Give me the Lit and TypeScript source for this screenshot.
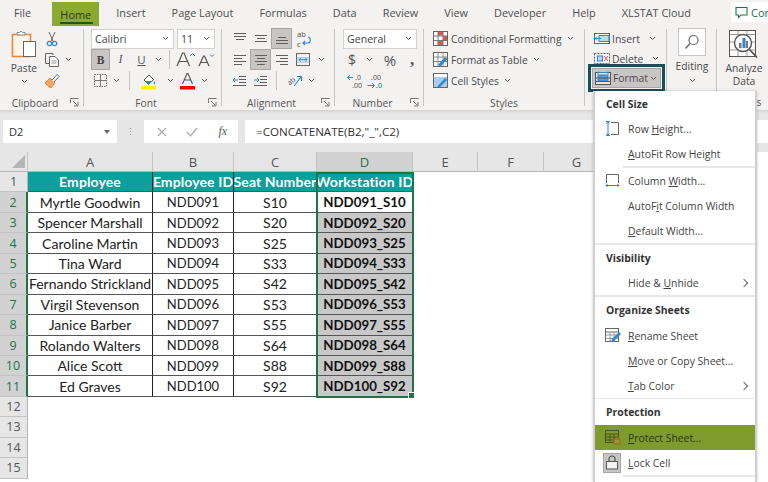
import { LitElement, html, css, svg } from "lit";
import { customElement } from "lit/decorators.js";

const G = "#5f5f5f";
const B = "#2f86d2";
const O = "#e8893a";
const ic = (w: number, h: number, body: unknown) =>
  html`<svg width=${w} height=${h} viewBox="0 0 ${w} ${h}" fill="none" stroke-width="1">${body}</svg>`;
const lines = (arr: number[][], c = G) =>
  arr.map(([a, b, y]) => svg`<path d="M${a} ${y}H${b}" stroke=${c}/>`);
const chev = html`<svg class="chev" width="7" height="5" viewBox="0 0 7 5" fill="none"><path d="M1 1l2.500 2.500L6 1" stroke="#555" stroke-width="1"/></svg>`;
const launcher = ic(9, 9, svg`<path d="M.5 5V.5H8.5" stroke="#777"/><path d="M3 3l4.500 4.500M4 8h4V4" stroke="#777"/>`);

const paste = ic(26, 28, svg`
  <rect x="1.500" y="4.500" width="18" height="22" stroke=${O} stroke-width="1.600" fill="#fff6ea"/>
  <path d="M6 5V2.500h2.500L10 1l1.500 1.500H14V5z" stroke="#888" fill="#fff"/>
  <rect x="12.500" y="11.500" width="12" height="15" stroke="#666" fill="#fff"/>`);
const scissors = ic(12, 16, svg`
  <path d="M3 1l4 9M9 1L5 10" stroke="#666"/>
  <circle cx="3.500" cy="12.500" r="2.200" stroke=${B} stroke-width="1.200"/><circle cx="8.500" cy="12.500" r="2.200" stroke=${B} stroke-width="1.200"/>`);
const copy = ic(16, 16, svg`
  <path d="M9 3V1.500H1.500V11.500H5" stroke="#666"/>
  <path d="M5.500 4.500H11L14.500 8V14.500H5.500z" stroke="#666" fill="#fff"/>
  <path d="M7.500 9H12.500M7.500 11H12.500" stroke="#999"/>`);
const painter = ic(16, 16, svg`
  <path d="M1 10l5-5 5 5-4 5c-1-1-1-1-2-.5 0-1.500-1-1-1.500-2C3 12.500 2 11 1 10z" fill="#f4a460" stroke=${O}/>
  <path d="M8 7l5-5.500 2 2-5 5.500" stroke="#666" fill="#fff"/>`);
const border = ic(15, 15, svg`
  <rect x="1.500" y="1.500" width="12" height="12" stroke="#777" stroke-dasharray="1.500 1"/>
  <path d="M7.500 1.500V13.500M1.500 7.500H13.500" stroke="#777"/>`);
const fill = ic(16, 18, svg`
  <path d="M3 8l5-5 4.500 4.500-5 5z" stroke="#555" fill="#fff"/><path d="M4 9h7.500l-4 3.500z" fill=${B}/>
  <path d="M13 9c1 1.500 1.500 2 1 3s-2 0-1-3z" fill=${B}/>
  <rect x="0" y="14" width="15" height="3.500" fill="#ffef00"/>`);
const fontA = ic(15, 18, svg`
  <path d="M2.500 12L7 1.500h1L12.500 12M4.500 8h6" stroke="#555" stroke-width="1.100"/>
  <rect x="0" y="14" width="15" height="3.500" fill="#f00"/>`);
const bigA = ic(20, 18, svg`
  <path d="M1 15L6.500 2h1.500L13.500 15M3.500 10.500h8" stroke="#555" stroke-width="1.200"/><path d="M14 5l2.500-2.500L19 5" stroke=${B}/>`);
const smallA = ic(17, 16, svg`
  <path d="M1 14L5.500 4h1L11 14M3 10.500h6" stroke="#555" stroke-width="1.200"/><path d="M12 2.500l2 2 2-2" stroke=${B}/>`);
const alTop = ic(14, 14, lines([[1, 13, 1.5], [1, 13, 4.5], [3, 11, 7.5]]));
const alMid = ic(14, 14, lines([[1, 13, 3.5], [3, 11, 6.5], [1, 13, 9.5]]));
const alBot = ic(14, 14, lines([[3, 11, 5.5], [1, 13, 8.5], [1, 13, 11.5]]));
const alL = ic(14, 14, lines([[1, 13, 2.5], [1, 9, 5.5], [1, 13, 8.5], [1, 9, 11.5]]));
const alC = ic(14, 14, lines([[1, 13, 2.5], [3, 11, 5.5], [1, 13, 8.5], [3, 11, 11.5]]));
const alR = ic(14, 14, lines([[1, 13, 2.5], [5, 13, 5.5], [1, 13, 8.5], [5, 13, 11.5]]));
const merge = ic(15, 15, svg`
  <rect x=".5" y="1.500" width="13" height="12" stroke="#666"/><path d="M1 5.500H13M1 10H13" stroke="#aaa"/>
  <rect x="1" y="5.500" width="12" height="4.500" fill="#cfe3f5"/><path d="M3 7.700H11M4.500 6L3 7.700 4.500 9.500M9.500 6L11 7.700 9.500 9.500" stroke=${B}/>`);
const indentL = ic(15, 12, svg`${lines([[7, 14, 1.5], [7, 14, 4.5], [7, 14, 7.5], [1, 14, 10.5]])}<path d="M1 5h5M3 3L1 5l2 2" stroke=${B}/>`);
const indentR = ic(15, 12, svg`${lines([[7, 14, 1.5], [7, 14, 4.5], [7, 14, 7.5], [1, 14, 10.5]])}<path d="M1 5h5M4 3l2 2-2 2" stroke=${B}/>`);
const orient = ic(18, 16, svg`
  <text x="2" y="11" font-size="7" fill="#555" font-family="Noto Sans" transform="rotate(-40 6 8)">ab</text>
  <path d="M9 13L16 4M12 3.500h4.500V8" stroke=${B} stroke-width="1.100"/>`);
const wrap = ic(16, 19, svg`
  <text x="1" y="8" font-size="7.500" fill="#555" font-family="Noto Sans">ab</text>
  <text x="1" y="18" font-size="7.500" fill="#555" font-family="Noto Sans">c</text>
  <path d="M12 8c3 0 3 6 0 6H7M9 12l-2 2 2 2" stroke=${B} stroke-width="1.100"/>`);
const decL = ic(17, 16, svg`
  <path d="M.5 4.500H6M3 2L.5 4.500 3 7" stroke=${B}/>
  <text x="8" y="7" font-size="7" fill="#555" font-family="Noto Sans">.0</text><text x="5" y="15" font-size="7" fill="#555" font-family="Noto Sans">.00</text>`);
const decR = ic(17, 16, svg`
  <text x="4" y="7" font-size="7" fill="#555" font-family="Noto Sans">.00</text>
  <path d="M.5 12.500H7M5 10l2.500 2.500L5 15" stroke=${B}/><text x="9" y="15" font-size="7" fill="#555" font-family="Noto Sans">.0</text>`);
const cond = ic(15, 15, svg`
  <rect x=".5" y=".5" width="14" height="14" stroke="#666" fill="#fff"/>
  <rect x="5" y="1" width="5" height="3.500" fill="#e4524c"/><rect x="10" y="5" width="4" height="4" fill="#e4524c"/><rect x="5" y="9" width="5" height="5" fill="#e4524c"/>
  <path d="M5 1V14M10 1V14M1 5H14M1 9.500H14" stroke="#777"/>`);
const fmtTable = ic(15, 15, svg`
  <rect x=".5" y=".5" width="14" height="14" stroke="#666" fill="#fff"/>
  <path d="M5 1V14M10 1V14M1 5H14M1 9.500H14" stroke="#888"/>
  <path d="M5 13l7-8 2.500 2-7 7.500z" fill=${B}/>`);
const cellSt = ic(15, 15, svg`
  <rect x=".5" y=".5" width="14" height="14" stroke="#666" fill="#fff"/>
  <rect x="1" y="4" width="13" height="10" fill="#a9cdea"/>
  <path d="M4 14l8-9 2 2-7 7z" fill=${B}/>`);
const insIc = ic(16, 13, svg`
  <rect x=".5" y="1.500" width="15" height="10" stroke="#666" fill="#fff"/><rect x="5" y="3.500" width="10" height="6" fill="#bcd8f0" stroke=${B}/>
  <path d="M1 6.500H7M3 4.500L1 6.500 3 8.500" stroke=${B}/>`);
const delIc = ic(16, 13, svg`
  <rect x=".5" y="1.500" width="15" height="10" stroke="#666" stroke-dasharray="2 1"/><rect x="3.500" y="4" width="5" height="5" fill="#bcd8f0" stroke=${B}/>
  <path d="M10 4l4 5M14 4l-4 5" stroke="#e4524c"/>`);
const fmtIc = ic(16, 14, svg`
  <rect x=".5" y="1.500" width="15" height="12" stroke="#555" fill="#e6e6e6"/><rect x="3" y="4" width="10" height="6" fill="#5b9ad8" stroke=${B}/>
  <path d="M3 .500V3M13 .500V3M3 1.500H13" stroke=${B}/><path d="M1 7H15M1 10.500H15" stroke="#555"/>`);
const magn = ic(16, 16, svg`<circle cx="9.500" cy="6" r="4.500" stroke="#666" stroke-width="1.200"/><path d="M6 9.500L1.500 14.500" stroke="#666" stroke-width="1.400"/>`);
const analyze = ic(30, 30, svg`
  <rect x=".5" y=".5" width="26" height="26" stroke="#555" fill="#fff"/>
  <path d="M1 4.500H26M1 12H26M1 20H26M9 1V26M18 1V26" stroke="#999"/>
  <circle cx="14" cy="13" r="8.500" stroke="#555" stroke-width="1.400" fill="#fff"/>
  <rect x="10" y="13" width="2.500" height="5" fill="#777"/><rect x="13.500" y="8" width="3" height="10" fill=${B}/><rect x="17" y="11" width="2" height="7" fill="#777"/>
  <path d="M20.500 19.500L28 27.500" stroke="#555" stroke-width="1.800"/>`);
const comment = ic(13, 13, svg`<path d="M1 1.500H12V9H6L3.500 11.500V9H1z" stroke="#217346" stroke-width="1.100"/>`);

const rowH = ic(15, 15, svg`
  <path d="M6 1.500H13.500V13.500H6" stroke="#666"/><path d="M3 1V14M1.500 2.500L3 1 4.500 2.500M1.500 12.500L3 14 4.500 12.500" stroke=${B}/><path d="M1 .5H5M1 14.500H5" stroke=${B}/>`);
const colW = ic(15, 15, svg`
  <path d="M1.500 10V1.500H13.500V10" stroke="#666"/><path d="M1 12.500H14M2.500 11L1 12.500 2.500 14M12.500 11L14 12.500 12.500 14" stroke=${B}/>`);
const rename = ic(16, 15, svg`
  <rect x=".5" y=".5" width="13" height="13" stroke="#666" fill="#fff"/><path d="M1 4H13" stroke="#666"/><path d="M5 4V13M9 4V13M1 7H13M1 10.500H13" stroke="#999"/>
  <path d="M6 14l1-3 7-7 2 2-7 7z" fill=${B}/>`);
const protect = ic(16, 15, svg`
  <rect x=".5" y=".5" width="13" height="12" stroke="#4a5320" /><path d="M1 4H13" stroke="#4a5320"/><path d="M5 4V12M9 4V12M1 7H13M1 10H13" stroke="#4a5320"/>
  <rect x="9" y="9" width="6" height="5" fill="#a8903a" stroke="#8a6d1e"/><path d="M10.500 9V7.500a1.500 1.500 0 0 1 3 0V9" stroke="#8a6d1e"/>`);
const lock = ic(14, 15, svg`<rect x="1.500" y="6.500" width="11" height="7.500" stroke="#555" fill="#f2f2f2"/><path d="M4 6.500V4a3 3 0 0 1 6 0V6.500" stroke="#555" stroke-width="1.200"/>`);

type Entry =
  | { h: string; tall?: boolean }
  | { sep: string }
  | { pre: string; u: string; post: string; icon?: unknown; arrow?: boolean; hot?: boolean; boxed?: boolean };

const MENU: Entry[] = [
  { h: "Cell Size" },
  { pre: "Row ", u: "H", post: "eight...", icon: rowH },
  { pre: "", u: "A", post: "utoFit Row Height" },
  { sep: "short" },
  { pre: "Column ", u: "W", post: "idth...", icon: colW },
  { pre: "AutoF", u: "i", post: "t Column Width" },
  { pre: "", u: "D", post: "efault Width..." },
  { sep: "full" },
  { h: "Visibility" },
  { pre: "Hide & ", u: "U", post: "nhide", arrow: true },
  { sep: "full" },
  { h: "Organize Sheets", tall: true },
  { pre: "", u: "R", post: "ename Sheet", icon: rename },
  { pre: "", u: "M", post: "ove or Copy Sheet..." },
  { pre: "", u: "T", post: "ab Color", arrow: true },
  { sep: "thin" },
  { h: "Protection", tall: true },
  { pre: "", u: "P", post: "rotect Sheet...", icon: protect, hot: true },
  { pre: "", u: "L", post: "ock Cell", icon: lock, boxed: true },
  { sep: "short" },
];

const DATA = [
  ["Myrtle Goodwin", "NDD091", "S10", "NDD091_S10"],
  ["Spencer Marshall", "NDD092", "S20", "NDD092_S20"],
  ["Caroline Martin", "NDD093", "S25", "NDD093_S25"],
  ["Tina Ward", "NDD094", "S33", "NDD094_S33"],
  ["Fernando Strickland", "NDD095", "S42", "NDD095_S42"],
  ["Virgil Stevenson", "NDD096", "S53", "NDD096_S53"],
  ["Janice Barber", "NDD097", "S55", "NDD097_S55"],
  ["Rolando Walters", "NDD098", "S64", "NDD098_S64"],
  ["Alice Scott", "NDD099", "S88", "NDD099_S88"],
  ["Ed Graves", "NDD100", "S92", "NDD100_S92"],
];
const HEAD = ["Employee", "Employee ID", "Seat Number", "Workstation ID"];
const TABS = ["Insert", "Page Layout", "Formulas", "Data", "Review", "View", "Developer", "Help", "XLSTAT Cloud"];

@customElement("app-root")
export class AppRoot extends LitElement {
  static styles = css`
    :host { display: block; position: relative; width: 768px; height: 482px; overflow: hidden; background: #fff;
      font-family: "Open Sans", "Noto Sans", sans-serif; font-size: 10.3px; color: #4a4a4a; }
    svg { display: block; flex: none; }
    .tabs { display: flex; height: 26px; background: #f3f2f1; padding-left: 14px; align-items: center; font-size: 10.9px; }
    .tab { margin-right: 26px; white-space: nowrap; color: #4f4f4f; padding-bottom: 2px; }
    .tab.file { margin-right: 21px; }
    .tab.home { background: #8bab30; height: 24px; margin: 2px 17px 0 0; width: 47px; display: flex; align-items: center; justify-content: center; position: relative; color: #2e3a10; padding: 0; }
    .tab.home::after { content: ""; position: absolute; left: 8px; right: 6px; bottom: 2px; height: 2px; background: #1c5a17; }
    .comments { position: absolute; left: 731px; top: 2px; width: 37px; height: 20px; background: #fff; display: flex; align-items: center; gap: 3px; padding-left: 4px; overflow: hidden; color: #217346; font-size: 11px; box-sizing: border-box; }
    .ribbon { display: flex; height: 84px; background: #f3f2f1; }
    .g { position: relative; display: flex; flex-direction: column; padding-top: 2px; box-sizing: border-box; height: 84px; flex: none; }
    .sep { width: 1px; margin: 3px 0 4px; background: #c8c6c4; flex: none; }
    .g1 { width: 83px; } .g2 { width: 137px; } .g3 { width: 112px; } .g4 { width: 88px; } .g5 { width: 160px; } .g6 { width: 81px; } .g7 { width: 49px; } .g8 { width: 50px; }
    .lab { margin-top: auto; height: 15px; display: flex; align-items: center; white-space: nowrap; color: #555; }
    .lab span { flex: 1; text-align: center; }
    .lab i { width: 13px; flex: none; display: flex; }
    .rows { display: flex; flex-direction: column; }
    .r { display: grid; height: 21px; align-items: center; justify-items: center; }
    .clip { display: grid; grid-template-columns: 42px 41px; }
    .paste { display: flex; flex-direction: column; align-items: center; padding: 2px 0 0 6px; }
    .paste b { font-weight: 400; margin: 3px 0 4px; line-height: 14px; }
    .clip .r { grid-template-columns: 20px 12px; justify-content: start; }
    .combo { background: #fff; border: 1px solid #d4d2d0; height: 20px; box-sizing: border-box; display: flex; align-items: center; justify-content: space-between; padding: 0 4px 0 3px; font-size: 10.6px; color: #444; }
    .r.f1 { grid-template-columns: 83px 38px; gap: 3px; margin-left: 7px; justify-content: start; justify-items: stretch; }
    .r.f2 { grid-template-columns: 19px 21px 21px 12px 11px 21px 21px; margin-left: 7px; justify-content: start; }
    .r.f3 { grid-template-columns: 18px 14px 12px 28px 14px 20px 15px; margin-left: 7px; justify-content: start; }
    .on { background: #c8c6c4; border: 1px solid #a8a6a4; box-sizing: border-box; width: 100%; height: 21px; display: flex; align-items: center; justify-content: center; }
    .fb { font: 700 11.5px "Liberation Serif", serif; color: #444; }
    .fi { font: italic 12px "Liberation Serif", serif; color: #555; }
    .fu { font-size: 11.5px; color: #555; text-decoration: underline; }
    .vs { width: 1px; height: 19px; background: #c8c6c4; }
    .r.a1 { grid-template-columns: 21px 21px 21px 23px; margin-left: 7px; justify-content: start; }
    .r.a2 { grid-template-columns: 21px 21px 21px 23px 12px; margin-left: 7px; justify-content: start; }
    .r.a3 { grid-template-columns: 21px 21px 11px 24px 10px; margin-left: 7px; justify-content: start; }
    .r.n1 { grid-template-columns: 74px; margin-left: 8px; justify-content: start; justify-items: stretch; }
    .r.n2 { grid-template-columns: 20px 15px 26px 18px; margin-left: 7px; justify-content: start; }
    .r.n3 { grid-template-columns: 20px 20px; margin-left: 10px; justify-content: start; }
    .cur { font-size: 14px; color: #555; }
    .pct { font-size: 15px; color: #555; }
    .com { font-size: 17px; font-weight: 700; color: #555; line-height: 1; font-family: "Liberation Serif", serif; margin-top: -1px; }
    .st { display: flex; align-items: center; height: 21px; padding-left: 9px; gap: 3px; white-space: nowrap; }
    .st .chev { margin-left: 2px; }
    .cl { display: flex; align-items: center; height: 20px; white-space: nowrap; margin-left: 9px; gap: 2px; padding-top: 1px; box-sizing: border-box; font-size: 10.4px; }
    .cl .chev { margin-left: 7px; }
    .fmt { display: flex; align-items: center; height: 20px; width: 69px; margin: 0 0 0 7px; background: #c8c6c4; box-sizing: border-box; border: 1px solid #a8a6a4; outline: 3px solid #17505a; outline-offset: 1px; font-size: 10.4px; padding-left: 2px; gap: 2px; }
    .big { display: flex; flex-direction: column; align-items: center; text-align: center; }
    .box { width: 28px; height: 28px; background: #fff; border: 1px solid #c8c6c4; box-sizing: border-box; display: flex; align-items: center; justify-content: center; }
    .big .t { margin-top: 3px; }
    .g7 { padding-left: 1px; }
    .g7 .chev { margin-top: 5px; }
    .an { line-height: 13px; padding: 4px 0 0 4px; }
    .an .t { margin-top: 2px; }
    .an .lab { width: 46px; margin-left: -4px; flex: none; }
    .shade { height: 10px; background: linear-gradient(#d2d2d2, #e6e6e6 3px); }
    .fbar { display: flex; height: 23px; padding: 0 0 0 3px; background: #e6e6e6; align-items: stretch; }
    .strip { background: #e6e6e6; height: 9px; }
    .name { width: 114px; background: #fff; display: flex; align-items: center; justify-content: space-between; padding: 0 7px 0 6px; box-sizing: border-box; font-size: 11px; color: #333; }
    .caret { width: 0; height: 0; border: 3px solid transparent; border-top: 4px solid #666; border-bottom: 0; }
    .dots { width: 27px; display: flex; flex-direction: column; align-items: center; justify-content: center; gap: 2px; }
    .dots i { width: 1px; height: 1px; background: #999; }
    .fx { width: 94px; background: #fff; display: grid; grid-template-columns: 1fr 1fr 1fr; align-items: center; justify-items: center; padding-left: 3px; box-sizing: border-box; }
    .fx em { font: italic 12px "Liberation Serif", serif; color: #555; }
    .formula { flex: 1; margin-left: 7px; background: #fff; display: flex; align-items: center; padding-left: 11px; font-size: 11.6px; color: #333; white-space: nowrap; }
    .sheet { position: relative; display: grid; grid-template-columns: 28px 125px 81px 83px 96px 65px 66px 66px 92px; grid-template-rows: 20px; grid-auto-rows: 20.45px; font-family: Lato, Carlito, sans-serif; font-size: 14px; color: #222; }
    .ch { background: #e6e6e6; border-right: 1px solid #c4c4c4; border-bottom: 1px solid #b5b5b5; display: flex; align-items: center; justify-content: center; font-family: "Open Sans", sans-serif; font-size: 13px; color: #555; box-sizing: border-box; }
    .ch.sel { background: #d2d2d2; color: #217346; }
    .corner { position: relative; }
    .corner::after { content: ""; position: absolute; left: 12px; top: 3px; width: 0; height: 0; border-style: solid; border-width: 0 0 13px 13px; border-color: transparent transparent #b5b5b5 transparent; }
    .rh { background: #e6e6e6; border-bottom: 1px solid #c4c4c4; border-right: 1px solid #b5b5b5; display: flex; align-items: center; justify-content: center; font-family: "Open Sans", sans-serif; font-size: 12.5px; color: #555; box-sizing: border-box; }
    .rh.sel { background: #d2d2d2; color: #217346; border-right: 2px solid #217346; }
    .c { display: flex; align-items: center; justify-content: center; white-space: nowrap; border-right: 1px solid #222; border-bottom: 1px solid #555; box-sizing: border-box; min-width: 0; }
    .c.hd { background: #0ba09b; color: #fff; font-weight: 700; letter-spacing: .1px; }
    .c.code { font-size: 13px; }
    .c.d { background: #c8c8c8; font-weight: 700; color: #111; font-size: 13.3px; }
    .c.d.active { background: #fff; }
    .selbox { position: absolute; left: 316px; top: 20px; width: 98px; height: 226px; border: 2px solid #217346; box-sizing: border-box; pointer-events: none; }
    .selbox::after { content: ""; position: absolute; right: -3px; bottom: -3px; width: 5px; height: 5px; background: #217346; border: 1px solid #fff; }
    .menu { position: absolute; left: 593px; top: 91px; width: 164px; height: 391px; background: #fff; border: solid #d2d0ce; border-width: 0 2px; box-shadow: 0 0 3px #0003; box-sizing: border-box; font-size: 10.4px; color: #444; }
    .mh { height: 25px; display: flex; align-items: center; padding-left: 11px; font-weight: 700; color: #333; }
    .mh.tall { height: 26px; }
    .mi { height: 25px; display: grid; grid-template-columns: 33px 1fr 14px; align-items: center; white-space: nowrap; }
    .mi u { text-underline-offset: 1px; }
    .mi.hot { background: #7e9c2e; color: #2a3410; }
    .mic { display: flex; justify-content: center; padding-left: 2px; }
    .mic.boxed { width: 18px; height: 20px; background: #c8c6c4; border: 1px solid #a8a6a4; box-sizing: border-box; align-items: center; margin-left: 8px; padding: 0; }
    .arrow { width: 5px; height: 5px; border: solid #666; border-width: 1px 1px 0 0; transform: rotate(45deg); }
    .msep { height: 2px; background: #e9e8e7; }
    .msep.thin { height: 1px; }
    .msep.short { margin-left: 28px; }
  `;

  renderRibbon() {
    return html`<div class="ribbon">
      <div class="g g1">
        <div class="clip">
          <div class="paste">${paste}<b>Paste</b>${chev}</div>
          <div class="rows">
            <div class="r">${scissors}<span></span></div>
            <div class="r">${copy}${chev}</div>
            <div class="r">${painter}<span></span></div>
          </div>
        </div>
        <div class="lab"><span>Clipboard</span><i>${launcher}</i></div>
      </div>
      <div class="sep"></div>
      <div class="g g2">
        <div class="r f1"><div class="combo">Calibri ${chev}</div><div class="combo">11 ${chev}</div></div>
        <div class="r f2"><div class="on"><span class="fb">B</span></div><span class="fi">I</span><span class="fu">U</span>${chev}<div class="vs"></div>${bigA}${smallA}</div>
        <div class="r f3">${border}${chev}<div class="vs"></div>${fill}${chev}${fontA}${chev}</div>
        <div class="lab"><span>Font</span><i>${launcher}</i></div>
      </div>
      <div class="sep"></div>
      <div class="g g3">
        <div class="r a1">${alTop}${alMid}<div class="on">${alBot}</div>${wrap}</div>
        <div class="r a2">${alL}<div class="on">${alC}</div>${alR}${merge}${chev}</div>
        <div class="r a3">${indentL}${indentR}<div class="vs"></div>${orient}${chev}</div>
        <div class="lab"><span>Alignment</span><i>${launcher}</i></div>
      </div>
      <div class="sep"></div>
      <div class="g g4">
        <div class="r n1"><div class="combo">General ${chev}</div></div>
        <div class="r n2"><span class="cur">$</span>${chev}<span class="pct">%</span><span class="com">,</span></div>
        <div class="r n3">${decL}${decR}</div>
        <div class="lab"><span>Number</span><i>${launcher}</i></div>
      </div>
      <div class="sep"></div>
      <div class="g g5">
        <div class="st">${cond}<span>Conditional Formatting</span>${chev}</div>
        <div class="st">${fmtTable}<span>Format as Table</span>${chev}</div>
        <div class="st">${cellSt}<span>Cell Styles</span>${chev}</div>
        <div class="lab"><span>Styles</span></div>
      </div>
      <div class="sep"></div>
      <div class="g g6">
        <div class="cl">${insIc}<span>Insert</span>${chev}</div>
        <div class="cl">${delIc}<span>Delete</span>${chev}</div>
        <div class="fmt">${fmtIc}<span>Format</span>${chev}</div>
      </div>
      <div class="sep"></div>
      <div class="g g7 big">
        <div class="box">${magn}</div>
        <div class="t">Editing</div>
        ${chev}
      </div>
      <div class="sep"></div>
      <div class="g g8 big an">
        ${analyze}
        <div class="t">Analyze<br />Data</div>
        <div class="lab"><span>Analysis</span></div>
      </div>
    </div>`;
  }

  renderSheet() {
    const cols = ["A", "B", "C", "D", "E", "F", "G", ""];
    const cells: unknown[] = [html`<div class="ch corner"></div>`];
    cols.forEach((c) => cells.push(html`<div class="ch ${c === "D" ? "sel" : ""}">${c}</div>`));
    for (let r = 1; r <= 15; r++) {
      const sel = r >= 2 && r <= 11;
      cells.push(html`<div class="rh ${sel ? "sel" : ""}">${r}</div>`);
      for (let c = 0; c < 8; c++) {
        if (r === 1 && c < 4) cells.push(html`<div class="c hd">${HEAD[c]}</div>`);
        else if (sel && c < 4) {
          const k = c === 3 ? `d ${r === 2 ? "active" : ""}` : c === 1 ? "code" : "";
          cells.push(html`<div class="c ${k}">${DATA[r - 2][c]}</div>`);
        } else cells.push(html`<div></div>`);
      }
    }
    return html`<div class="sheet">${cells}<div class="selbox"></div></div>`;
  }

  renderMenu() {
    return html`<div class="menu">
      ${MENU.map((m) => {
        if ("h" in m) return html`<div class="mh ${m.tall ? "tall" : ""}">${m.h}</div>`;
        if ("sep" in m) return html`<div class="msep ${m.sep}"></div>`;
        return html`<div class="mi ${m.hot ? "hot" : ""}">
          <div class="mic ${m.boxed ? "boxed" : ""}">${m.icon ?? ""}</div>
          <span>${m.pre}<u>${m.u}</u>${m.post}</span>
          ${m.arrow ? html`<div class="arrow"></div>` : html`<span></span>`}
        </div>`;
      })}
    </div>`;
  }

  render() {
    return html`
      <div class="tabs">
        <div class="tab file">File</div>
        <div class="tab home">Home</div>
        ${TABS.map((t) => html`<div class="tab">${t}</div>`)}
        <div class="comments">${comment}<span>Comments</span></div>
      </div>
      ${this.renderRibbon()}
      <div class="shade"></div>
      <div class="fbar">
        <div class="name">D2<span class="caret"></span></div>
        <div class="dots"><i></i><i></i><i></i></div>
        <div class="fx">
          ${ic(10, 10, svg`<path d="M1 1l8 8M9 1L1 9" stroke="#aaa" stroke-width="1.200"/>`)}
          ${ic(12, 10, svg`<path d="M1 5l3.500 4L11 1" stroke="#aaa" stroke-width="1.200"/>`)}
          <em>fx</em>
        </div>
        <div class="formula">=CONCATENATE(B2,"_",C2)</div>
      </div>
      <div class="strip"></div>
      ${this.renderSheet()}
      ${this.renderMenu()}
    `;
  }
}
